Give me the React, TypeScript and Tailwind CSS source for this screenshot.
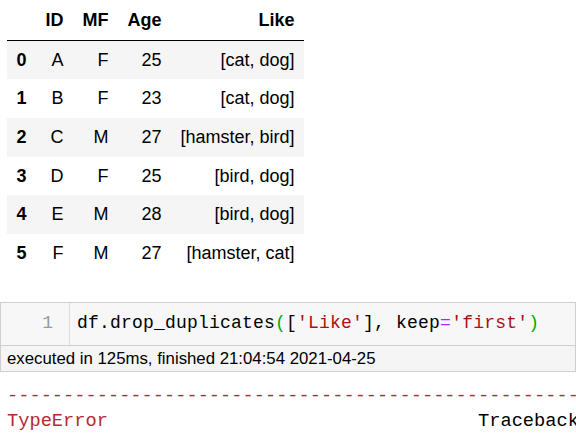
import React from "react";

const rows = [
  { i: 0, id: "A", mf: "F", age: 25, like: "[cat, dog]" },
  { i: 1, id: "B", mf: "F", age: 23, like: "[cat, dog]" },
  { i: 2, id: "C", mf: "M", age: 27, like: "[hamster, bird]" },
  { i: 3, id: "D", mf: "F", age: 25, like: "[bird, dog]" },
  { i: 4, id: "E", mf: "M", age: 28, like: "[bird, dog]" },
  { i: 5, id: "F", mf: "M", age: 27, like: "[hamster, cat]" },
];

const mono = "font-['Liberation_Mono','DejaVu_Sans_Mono',monospace]";

export default function App() {
  return (
    <div className="w-[576px] h-[437px] overflow-hidden bg-white text-black font-['Liberation_Sans',Arial,sans-serif]">
      {/* DataFrame output */}
      <div className="pl-[7px]">
        <table className="border-collapse text-[18px] leading-[1.15]">
          <thead>
            <tr className="border-b border-black">
              <th className="px-[9.5px] py-[9.5px] text-right font-bold"></th>
              <th className="px-[9.5px] py-[9.5px] text-right font-bold">ID</th>
              <th className="px-[9.5px] py-[9.5px] text-right font-bold">MF</th>
              <th className="px-[9.5px] py-[9.5px] text-right font-bold">Age</th>
              <th className="px-[9.5px] py-[9.5px] text-right font-bold">Like</th>
            </tr>
          </thead>
          <tbody>
            {rows.map((r) => (
              <tr key={r.i} className={r.i % 2 === 0 ? "bg-[#f5f5f5]" : "bg-white"}>
                <th className="px-[9.5px] py-[9px] text-right font-bold">{r.i}</th>
                <td className="px-[9.5px] py-[9px] text-right">{r.id}</td>
                <td className="px-[9.5px] py-[9px] text-right">{r.mf}</td>
                <td className="px-[9.5px] py-[9px] text-right">{r.age}</td>
                <td className="px-[9.5px] py-[9px] text-right">{r.like}</td>
              </tr>
            ))}
          </tbody>
        </table>
      </div>

      {/* Code cell */}
      <div className="mt-[29px] border border-[#cfcfcf] bg-[#f7f7f7]">
        <div className={`flex h-[42px] items-center ${mono} text-[18px] whitespace-pre`}>
          <div className="flex h-full w-[69px] items-center justify-end border-r border-[#dddddd] pr-[16px] text-[#999999]">
            1
          </div>
          <div className="pl-[7px] tracking-[0.2px]">
            <span>df.drop_duplicates</span>
            <span className="text-[#00aa00]">(</span>
            <span>[</span>
            <span className="text-[#aa1111]">'Like'</span>
            <span>], keep</span>
            <span className="text-[#aa22ff]">=</span>
            <span className="text-[#aa1111]">'first'</span>
            <span className="text-[#00aa00]">)</span>
          </div>
        </div>
        <div className="flex h-[26px] items-center border-t border-[#cfcfcf] bg-[#f5f5f5] pl-[6px] text-[16.8px]">
          executed in 125ms, finished 21:04:54 2021-04-25
        </div>
      </div>

      {/* Error output */}
      <div className={`mt-[12px] pl-[7px] ${mono} text-[18.7px] leading-[25px] whitespace-pre`}>
        <div className="text-[#b22b31]">{"-".repeat(75)}</div>
        <div>
          <span className="text-[#b22b31]">TypeError</span>
          <span>{"                                 "}Traceback (most recent call last)</span>
        </div>
      </div>
    </div>
  );
}
